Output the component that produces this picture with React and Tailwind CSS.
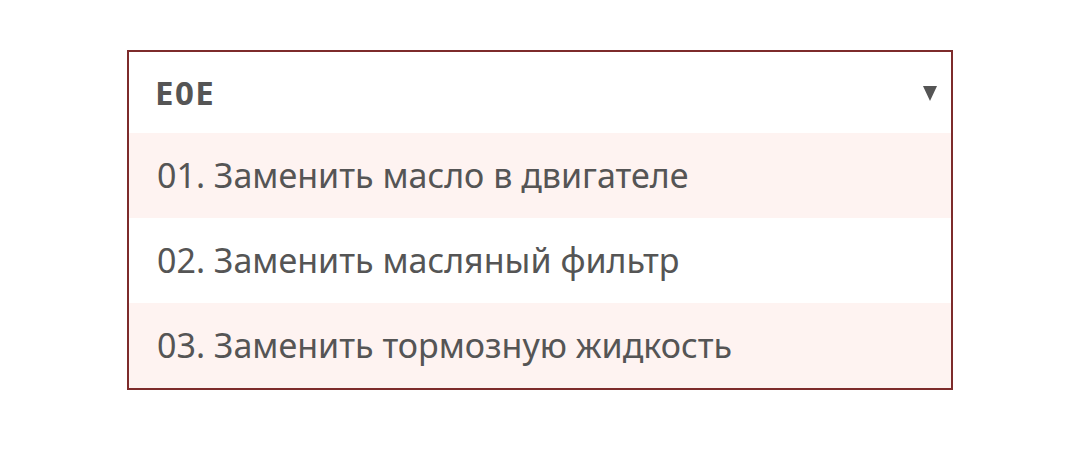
import React from 'react';

const items = [
  '01. Заменить масло в двигателе',
  '02. Заменить масляный фильтр',
  '03. Заменить тормозную жидкость',
];

export default function App() {
  return (
    <div className="min-h-[475px] bg-white pt-[50px] font-['Noto_Sans',sans-serif]">
      {/* Select box */}
      <div className="mx-auto w-[826px] border-2 border-[#7d2b2b]">
        <div className="flex h-[81px] items-center justify-between pl-[26px] pr-[14px]">
          <span className="text-[33px] font-bold tracking-[1.5px] text-[#555]">E0E</span>
          <span className="mt-[2px] h-0 w-0 border-x-[7px] border-t-[15px] border-x-transparent border-t-[#555]" />
        </div>
        {items.map((item, i) => (
          <div
            key={item}
            className={
              'flex h-[85px] items-center pl-[28px] text-[34px] text-[#555] ' +
              (i % 2 === 0 ? 'bg-[#fef3f1]' : 'bg-white')
            }
          >
            {item}
          </div>
        ))}
      </div>
    </div>
  );
}
